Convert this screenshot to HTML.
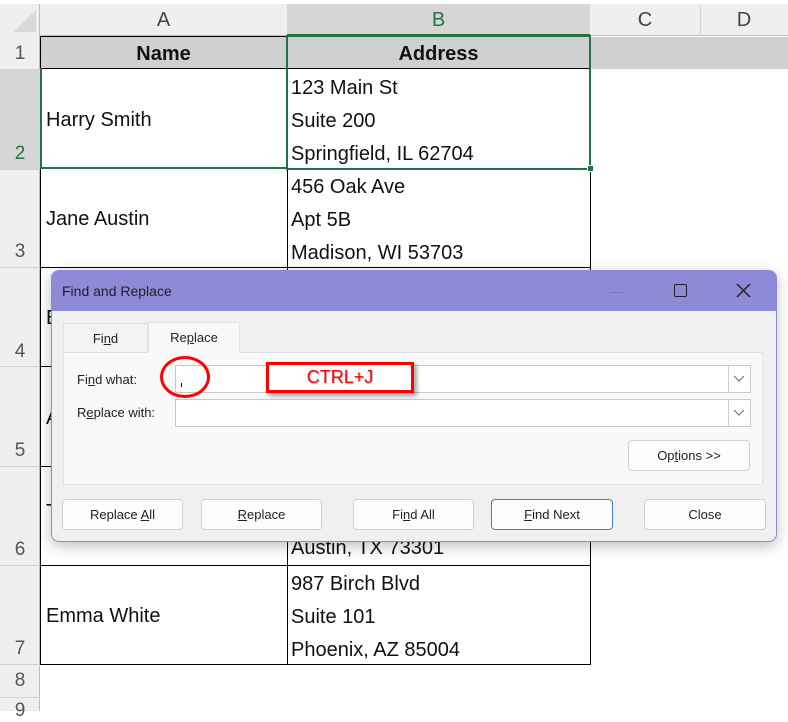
<!DOCTYPE html>
<html><head><meta charset="utf-8"><style>
*{margin:0;padding:0;box-sizing:border-box}
body{width:788px;height:711px;overflow:hidden;background:#fff;position:relative;font-family:"Liberation Sans",sans-serif}
.a{position:absolute}
.ch{font-size:20px;color:#444;text-align:center;line-height:32px;top:4px;height:32px}
.rh{left:0;width:40px;text-align:center;font-size:19px;color:#555}
.c{font-family:"Liberation Sans",sans-serif;font-size:20px;color:#111}
.hl{background:#000;height:1px}
.vl{background:#000;width:1px}
.btn{position:absolute;height:31px;background:#fdfdfd;border:1px solid #d0d0d0;border-radius:4px;font-size:13px;color:#222;text-align:center;line-height:29px}
.dlg{font-size:13px;color:#222}
</style></head><body>
<div class="a" style="left:0;top:4px;width:788px;height:32px;background:#efefef;border-bottom:1px solid #bdbdbd"></div>
<div class="a" style="left:0;top:4px;width:40px;height:707px;background:#efefef;border-right:1px solid #bdbdbd"></div>
<div class="a" style="left:14px;top:10px;width:22px;height:22px;background:linear-gradient(135deg,transparent 50%,#d8d8d8 50%)"></div>
<div class="a" style="left:287px;top:4px;width:303px;height:32px;background:#d6d6d6;border-bottom:2px solid #217346"></div>
<div class="a ch" style="left:40px;width:247px">A</div>
<div class="a ch" style="left:287px;width:303px;color:#217346">B</div>
<div class="a ch" style="left:590px;width:110px">C</div>
<div class="a ch" style="left:700px;width:88px">D</div>
<div class="a" style="left:700px;top:6px;width:1px;height:30px;background:#d6d6d6"></div>
<div class="a" style="left:0;top:69px;width:40px;height:100px;background:#d6d6d6"></div>
<div class="a rh" style="top:43px">1</div>
<div class="a rh" style="top:143px;color:#217346">2</div>
<div class="a rh" style="top:241px">3</div>
<div class="a rh" style="top:341px">4</div>
<div class="a rh" style="top:440px">5</div>
<div class="a rh" style="top:539px">6</div>
<div class="a rh" style="top:638px">7</div>
<div class="a rh" style="top:670px">8</div>
<div class="a rh" style="top:700px">9</div>
<div class="a" style="left:0;top:169px;width:40px;height:1px;background:#d0d0d0"></div>
<div class="a" style="left:0;top:267px;width:40px;height:1px;background:#d0d0d0"></div>
<div class="a" style="left:0;top:366px;width:40px;height:1px;background:#d0d0d0"></div>
<div class="a" style="left:0;top:466px;width:40px;height:1px;background:#d0d0d0"></div>
<div class="a" style="left:0;top:565px;width:40px;height:1px;background:#d0d0d0"></div>
<div class="a" style="left:0;top:664px;width:40px;height:1px;background:#d0d0d0"></div>
<div class="a" style="left:0;top:697px;width:40px;height:1px;background:#d0d0d0"></div>
<div class="a" style="left:40px;top:37px;width:748px;height:32px;background:#d0d0d0"></div>
<div class="a c" style="left:40px;top:43px;width:247px;text-align:center;font-weight:bold">Name</div>
<div class="a c" style="left:287px;top:43px;width:303px;text-align:center;font-weight:bold">Address</div>
<div class="a hl" style="left:40px;top:36px;width:550px"></div>
<div class="a hl" style="left:40px;top:68px;width:550px"></div>
<div class="a hl" style="left:40px;top:168px;width:550px"></div>
<div class="a hl" style="left:40px;top:267px;width:550px"></div>
<div class="a hl" style="left:40px;top:366px;width:550px"></div>
<div class="a hl" style="left:40px;top:466px;width:550px"></div>
<div class="a hl" style="left:40px;top:565px;width:550px"></div>
<div class="a hl" style="left:40px;top:664px;width:550px"></div>
<div class="a vl" style="left:40px;top:36px;height:629px"></div>
<div class="a vl" style="left:287px;top:36px;height:629px"></div>
<div class="a vl" style="left:590px;top:36px;height:629px"></div>
<div class="a" style="left:40px;top:68px;width:248px;height:101px;border:2px solid #217346;border-top:none;border-right:none"></div>
<div class="a" style="left:286px;top:35px;width:305px;height:135px;border:2px solid #217346"></div>
<div class="a" style="left:587px;top:165px;width:7px;height:7px;background:#217346;border:1px solid #fff"></div>
<div class="a c" style="left:46px;top:109px">Harry Smith</div>
<div class="a c" style="left:291px;top:72px;line-height:33px">123 Main St<br>Suite 200<br>Springfield, IL 62704</div>
<div class="a c" style="left:46px;top:208px">Jane Austin</div>
<div class="a c" style="left:291px;top:171px;line-height:33px">456 Oak Ave<br>Apt 5B<br>Madison, WI 53703</div>
<div class="a c" style="left:46px;top:307px">E</div>
<div class="a c" style="left:46px;top:407px">A</div>
<div class="a c" style="left:46px;top:501px">T</div>
<div class="a c" style="left:291px;top:537px">Austin, TX 73301</div>
<div class="a c" style="left:46px;top:605px">Emma White</div>
<div class="a c" style="left:291px;top:568px;line-height:33px">987 Birch Blvd<br>Suite 101<br>Phoenix, AZ 85004</div>
<div class="a dlg" style="left:51px;top:270px;width:726px;height:272px;background:#f0f0f0;border:1px solid #8e8ad8;border-radius:8px;overflow:hidden;box-shadow:0 4px 14px rgba(0,0,0,.25)">
 <div class="a" style="left:0;top:0;width:726px;height:40px;background:#8e8ad8"></div>
 <div class="a" style="left:10px;top:12px;font-size:14px;color:#222">Find and Replace</div>
 <div class="a" style="left:558px;top:21px;width:14px;height:1px;background:#7a78b8"></div>
 <div class="a" style="left:622px;top:13px;width:13px;height:13px;border:1.5px solid #222;border-radius:2px"></div>
 <svg class="a" style="left:684px;top:12px" width="15" height="15"><path d="M1 1L14 14M14 1L1 14" stroke="#222" stroke-width="1.5"/></svg>
 <div class="a" style="left:11px;top:52px;width:85px;height:29px;background:#f3f3f3;border:1px solid #e2e2e2;border-bottom:none;text-align:center;line-height:29px">Fi<u>n</u>d</div>
 <div class="a" style="left:96px;top:51px;width:92px;height:31px;background:#f9f9f9;border:1px solid #e2e2e2;border-bottom:none;text-align:center;line-height:30px;z-index:2">Re<u>p</u>lace</div>
 <div class="a" style="left:11px;top:81px;width:700px;height:133px;background:#f9f9f9;border:1px solid #e2e2e2"></div>
 <div class="a" style="left:25px;top:101px">Fi<u>n</u>d what:</div>
 <div class="a" style="left:25px;top:134px">R<u>e</u>place with:</div>
 <div class="a" style="left:123px;top:94px;width:576px;height:28px;background:#fff;border:1px solid #c8c8c8"></div>
 <div class="a" style="left:676px;top:95px;width:22px;height:26px;border-left:1px solid #d0d0d0"></div>
 <svg class="a" style="left:681px;top:104px" width="12" height="8"><path d="M1 1L6 6L11 1" stroke="#666" fill="none"/></svg>
 <div class="a" style="left:123px;top:128px;width:576px;height:28px;background:#fff;border:1px solid #c8c8c8"></div>
 <div class="a" style="left:676px;top:129px;width:22px;height:26px;border-left:1px solid #d0d0d0"></div>
 <svg class="a" style="left:681px;top:138px" width="12" height="8"><path d="M1 1L6 6L11 1" stroke="#666" fill="none"/></svg>
 <div class="a" style="left:129px;top:112px;width:1px;height:4px;background:#000"></div>
 <div class="btn" style="left:576px;top:169px;width:122px">Op<u>t</u>ions &gt;&gt;</div>
 <div class="btn" style="left:10px;top:228px;width:121px">Replace <u>A</u>ll</div>
 <div class="btn" style="left:149px;top:228px;width:121px"><u>R</u>eplace</div>
 <div class="btn" style="left:301px;top:228px;width:121px">Fi<u>n</u>d All</div>
 <div class="btn" style="left:439px;top:228px;width:122px;border:1.5px solid #3b83d0"><u>F</u>ind Next</div>
 <div class="btn" style="left:592px;top:228px;width:122px">Close</div>
</div>
<div class="a" style="left:160px;top:356px;width:50px;height:42px;border:3px solid #f00;border-radius:50%"></div>
<div class="a" style="left:266px;top:362px;width:148px;height:31px;border:3px solid #f00;background:#fff;box-shadow:3px 3px 4px rgba(0,0,0,.35);color:#f00;font-size:18px;text-align:center;line-height:25px;text-shadow:1px 1px 1px rgba(0,0,0,.3)">CTRL+J</div>
</body></html>
